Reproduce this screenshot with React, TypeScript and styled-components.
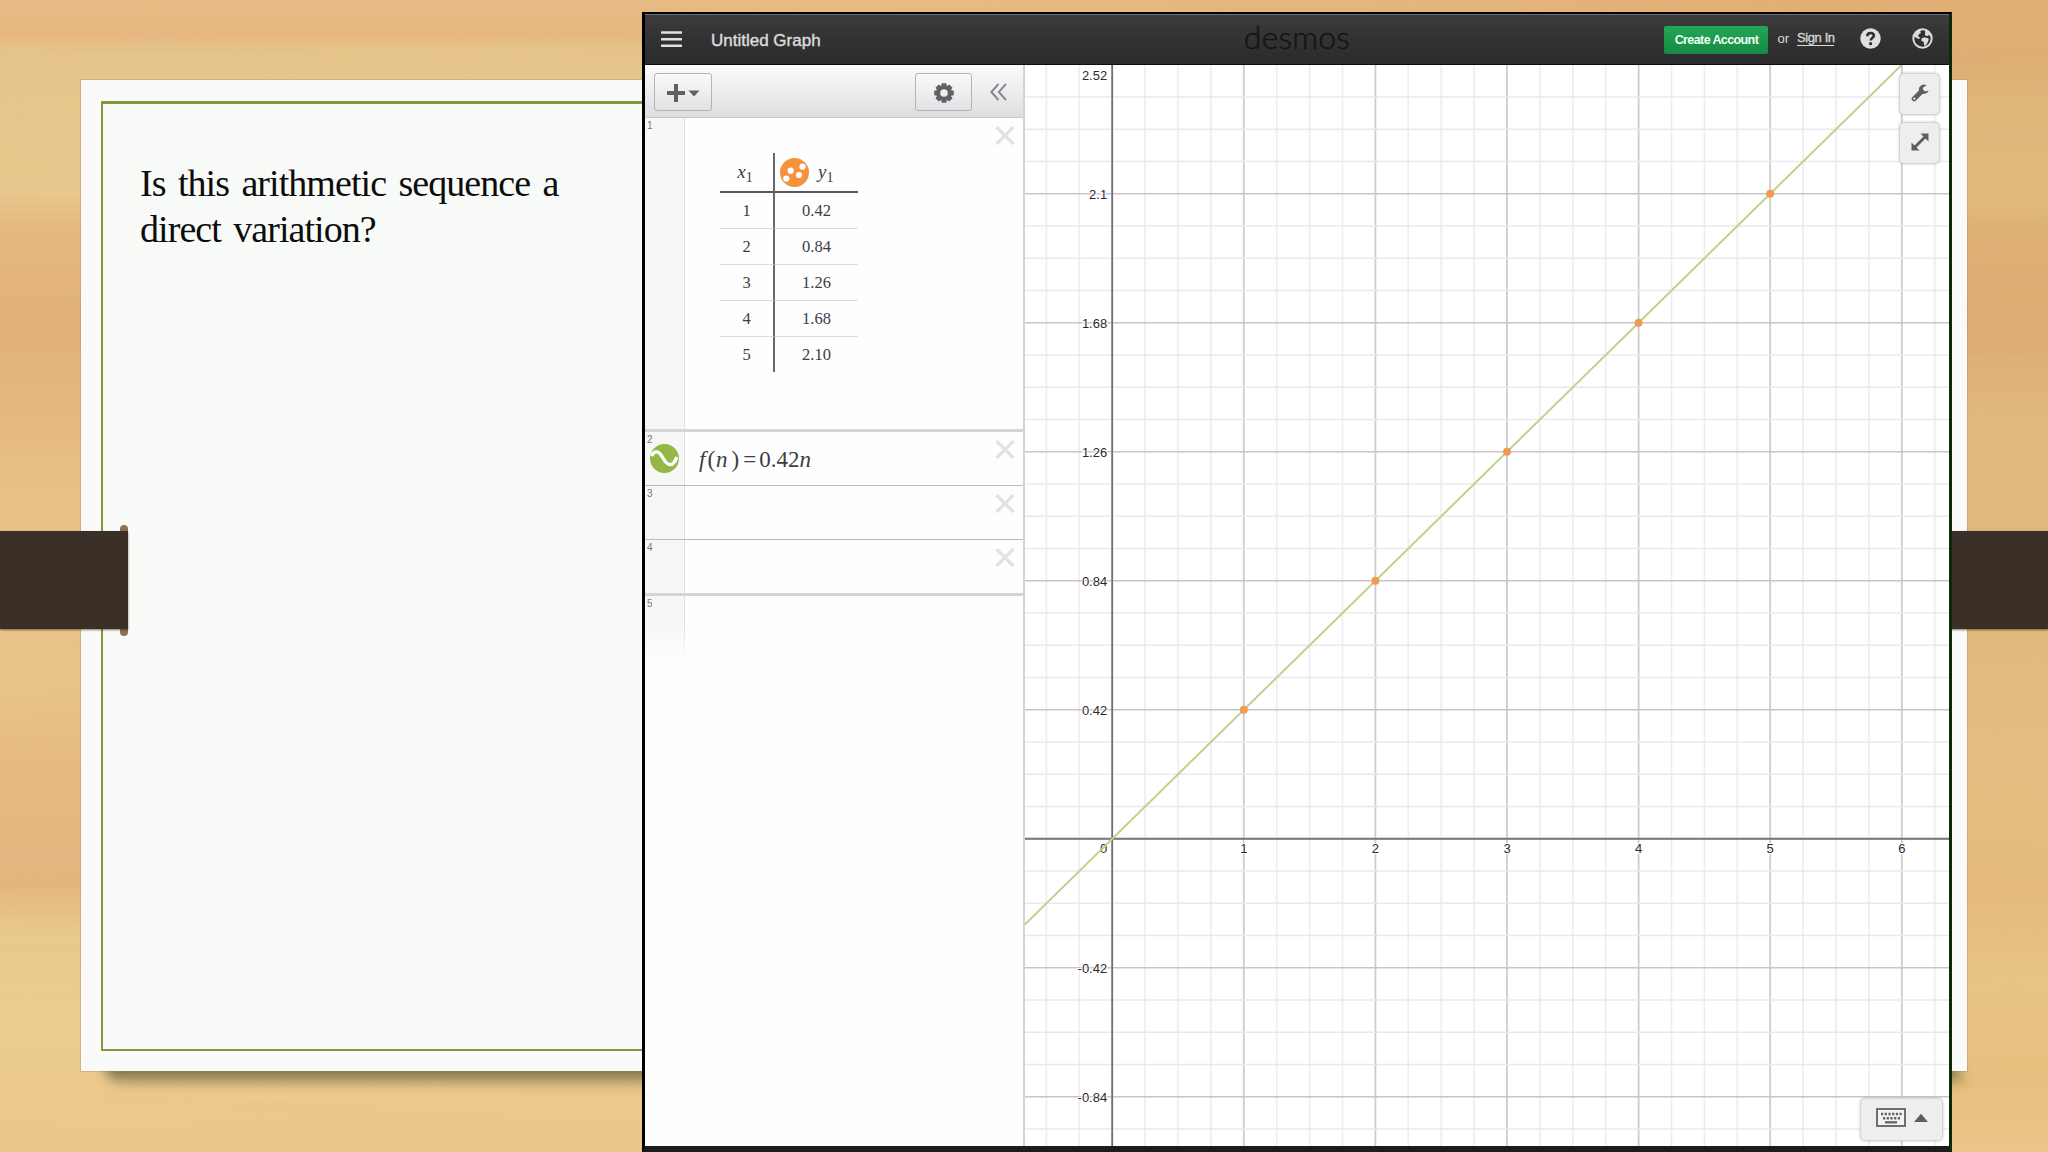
import React from "react";
import styled, { createGlobalStyle, css } from "styled-components";

const sans = `"Liberation Sans", Arial, sans-serif`;
const serif = `"Liberation Serif", "Times New Roman", serif`;

const GlobalStyle = createGlobalStyle`
  * { box-sizing: border-box; }
  body { margin: 0; overflow: hidden; }
`;

/* ---------- slide ---------- */

const Slide = styled.main`
  position: relative;
  width: 2048px;
  height: 1152px;
  overflow: hidden;
  padding: 80px 81px 81px;
  display: flex;
  background: linear-gradient(
    180deg, #e8bc86 0, #e6b67e 35px, #e6c58b 52px, #e7ca8e 190px, #e5b880 225px,
    #e2b079 320px, #e4b67e 400px, #e8c085 480px, #e8c488 620px, #e9c487 690px,
    #e6ba82 760px, #e3b57e 885px, #e8c88c 925px, #ebce90 1010px, #ebca8b 1090px, #ecc68a 1152px
  );
`;

const RightWood = styled.div`
  position: absolute;
  inset: 0;
  background: linear-gradient(
    180deg, #e2af74 0, #deae73 60px, #dfb578 100px, #e0ba7b 200px, #dfaf74 235px,
    #ddac72 330px, #e0b87c 420px, #e1b87c 620px, #e4bd80 760px, #e5bb7c 900px,
    #e8c584 980px, #e8c07e 1080px, #ecc68a 1152px
  );
  mask-image: linear-gradient(90deg, transparent 900px, #000 1800px);
`;

const Grain = styled.svg`
  position: absolute;
  inset: 0;
  opacity: 0.18;
`;

const PaperShadow = styled.div`
  position: absolute;
  left: 104px;
  right: 92px;
  top: 1052px;
  height: 28px;
  background: #6b6540;
  opacity: 0.85;
  filter: blur(7px);
  transform: skewX(20deg);
`;

const Paper = styled.section`
  position: relative;
  flex: 1;
  padding: 21px 20px 20px;
  display: flex;
  background: linear-gradient(180deg, #fbfafb, #fafafa);
  box-shadow: 0 0 0 1px rgba(160, 130, 90, 0.3);
`;

const Frame = styled.div`
  flex: 1;
  border: solid #80983a;
  border-width: 3px 2px 2px;
  padding: 56px 37px;
  background: linear-gradient(180deg, #f8faf8 0, #f9fbf9 520px, #f9f9fa 600px, #f9f9f9 100%);
`;

const Question = styled.p`
  margin: 0;
  width: 460px;
  font: 38px/46px ${serif};
  letter-spacing: -0.94px;
  word-spacing: 3.8px;
  color: #0c0c0c;
`;

const Slit = styled.div`
  position: absolute;
  left: 120px;
  top: 525px;
  width: 8px;
  height: 111px;
  border-radius: 4px;
  background: #8d7353;
`;

const Band = styled.div<{ $side: "left" | "right" }>`
  position: absolute;
  top: 531px;
  height: 98px;
  width: 128px;
  ${(p) => p.$side}: 0;
  background: #3a3028;
  box-shadow: 0 1px 2px rgba(50, 35, 20, 0.6);
`;

/* ---------- calculator window ---------- */

const Window = styled.div`
  position: absolute;
  left: 642px;
  top: 12px;
  width: 1310px;
  height: 1140px;
  display: flex;
  flex-direction: column;
  border: solid #000;
  border-width: 2px 3px 0;
  border-right-color: #0c2a08;
  border-bottom: 6px solid #1d1c1d;
  background: #fff;
`;

const Header = styled.header`
  height: 51px;
  flex: none;
  display: grid;
  grid-template-columns: 1fr auto 1fr;
  align-items: center;
  border-top: 1px solid #6f7370;
  border-bottom: 1px solid #0e0e10;
  background: linear-gradient(180deg, #3b3b3b, #2b2a2c);
`;

const HeaderLeft = styled.div`
  display: flex;
  align-items: center;
  padding-left: 16px;
  gap: 29px;
  margin-top: -1px;
`;

const Title = styled.h1`
  margin: 3px 0 0;
  font: 400 17px/20px ${sans};
  color: #dcdcdc;
  -webkit-text-stroke: 0.4px #dcdcdc;
`;

const Brand = styled.div`
  font: 300 32px/32px Lato, ${sans};
  letter-spacing: 0.2px;
  color: #151516;
  -webkit-text-stroke: 0.5px #151516;
  margin-top: -5px;
`;

const HeaderRight = styled.div`
  display: flex;
  align-items: center;
  justify-content: flex-end;
  padding-right: 16px;
  margin-top: -2px;
`;

const CreateButton = styled.button`
  width: 104px;
  height: 28px;
  margin-top: 3px;
  padding: 0;
  border: 0;
  border-radius: 2px;
  background: linear-gradient(180deg, #21a755, #178a45);
  color: #f2fff6;
  font: 700 12.5px/28px ${sans};
  letter-spacing: -0.6px;
  white-space: nowrap;
`;

const Or = styled.span`
  margin: 0 8px 0 9px;
  font: 13px/16px ${sans};
  color: #d8d8d8;
`;

const SignIn = styled.a`
  width: 37px;
  white-space: nowrap;
  font: 13px/16px ${sans};
  letter-spacing: -0.4px;
  color: #d8d8d8;
  -webkit-text-stroke: 0.3px #d8d8d8;
  border-bottom: 1px solid #d8d8d8;
  line-height: 14px;
`;

const IconSlot = styled.span<{ $gap: number }>`
  display: flex;
  margin-left: ${(p) => p.$gap}px;
`;

const Body = styled.div`
  flex: 1;
  display: flex;
  min-height: 0;
`;

const Sidebar = styled.aside`
  width: 380px;
  flex: none;
  display: flex;
  flex-direction: column;
  border-right: 2px solid #d4d2d5;
  background: #fefefe;
`;

const Toolbar = styled.div`
  height: 53px;
  flex: none;
  display: flex;
  align-items: center;
  padding: 1px 16px 0 9px;
  border-bottom: 1px solid #c9c7ca;
  background: linear-gradient(180deg, #fcfbfc, #dfdde0);
`;

const ToolButton = styled.button<{ $width: number }>`
  width: ${(p) => p.$width}px;
  height: 38px;
  padding: 2px 0 0;
  display: flex;
  align-items: center;
  justify-content: center;
  border: 1px solid #b5b3b6;
  border-radius: 3px;
  background: linear-gradient(180deg, #fbfafb, #e3e1e4);
`;

const Spacer = styled.div`
  flex: 1;
`;

const Collapse = styled.span`
  display: flex;
  margin-left: 18px;
`;

const Expression = styled.div<{ $height: number; $thick?: boolean; $last?: boolean }>`
  height: ${(p) => p.$height}px;
  flex: none;
  display: flex;
  border-bottom: ${(p) => (p.$last ? "0" : p.$thick ? "3px solid #d6d4d7" : "1px solid #bcbabd")};
`;

const Gutter = styled.div<{ $fade?: boolean; $tint?: boolean }>`
  width: 40px;
  flex: none;
  padding: 2px 0 0 2px;
  border-right: 1px solid #e1dfe2;
  background: ${(p) => (p.$tint ? "#f6f8f6" : "#f8f7f8")};
  font: 10px/12px ${sans};
  color: #77757a;
  ${(p) =>
    p.$fade &&
    css`
      mask-image: linear-gradient(180deg, #000 40%, transparent);
    `}
`;

const CurveIcon = styled.svg`
  display: block;
  margin: -2px 0 0 3px;
`;

const Content = styled.div<{ $table?: boolean }>`
  flex: 1;
  padding: ${(p) => (p.$table ? "35px 0 0 35px" : "13px 0 0 13px")};
`;

const CloseSlot = styled.span`
  display: flex;
  padding: 8px 8px 0 0;
`;

const Formula = styled.div`
  display: flex;
  align-items: baseline;
  font: 23px/29px ${serif};
  color: #3f3c42;
`;

const Part = styled.span<{ $left?: number; $italic?: boolean }>`
  margin-left: ${(p) => p.$left ?? 0}px;
  font-style: ${(p) => (p.$italic ? "italic" : "normal")};
`;

const Table = styled.div`
  width: 138px;
  display: grid;
  grid-template-columns: 55px 83px;
`;

const HeadCell = styled.div<{ $divider?: boolean }>`
  height: 40px;
  display: flex;
  align-items: center;
  justify-content: ${(p) => (p.$divider ? "flex-start" : "center")};
  gap: 9px;
  padding: ${(p) => (p.$divider ? "0 0 0 5px" : "0 3px 0 0")};
  border-bottom: 2px solid #5a565e;
  border-right: ${(p) => (p.$divider ? "0" : "2px solid #6a666e")};
  font: italic 19px/24px ${serif};
  color: #3f3c42;
  sub { font: 14px/10px ${serif}; vertical-align: -4px; }
`;

const Cell = styled.div<{ $divider?: boolean; $last?: boolean }>`
  height: ${(p) => (p.$last ? 35 : 36)}px;
  display: flex;
  align-items: center;
  justify-content: center;
  border-bottom: ${(p) => (p.$last ? "0" : "1px solid #dddbde")};
  border-right: ${(p) => (p.$divider ? "2px solid #6a666e" : "0")};
  font: 16.5px/20px ${serif};
  color: #3f3c42;
`;

const GraphPane = styled.div`
  position: relative;
  flex: 1;
  overflow: hidden;
`;

const GraphSvg = styled.svg`
  display: block;
`;

const FloatingButtons = styled.div`
  position: absolute;
  right: 9px;
  top: 8px;
  display: flex;
  flex-direction: column;
  gap: 7px;
`;

const buttonFace = css`
  display: flex;
  align-items: center;
  justify-content: center;
  padding: 0;
  border: 1px solid #d5d3d6;
  border-radius: 5px;
  background: #efeeef;
  box-shadow: 0 0 3px rgba(0, 0, 0, 0.2);
`;

const GraphButton = styled.button`
  ${buttonFace}
  width: 41px;
  height: 42px;
  padding-bottom: 2px;
`;

const KeypadButton = styled.button`
  ${buttonFace}
  position: absolute;
  right: 6px;
  bottom: 5px;
  width: 83px;
  height: 43px;
  gap: 8px;
  padding-bottom: 4px;
`;

/* ---------- icons ---------- */

const Hamburger = () => (
  <svg width="21" height="18" viewBox="0 0 21 18">
    <path d="M1 2.5h19M1 9.2h19M1 15.8h19" stroke="#e2e2e2" strokeWidth="2.6" strokeLinecap="round" />
  </svg>
);

const Close = () => (
  <svg width="20" height="19" viewBox="0 0 20 19">
    <path d="M1.500 1l17 17M18.500 1l-17 17" stroke="#e3e1e4" strokeWidth="3.200" />
  </svg>
);

const PlusCaret = () => (
  <svg width="34" height="20" viewBox="0 0 34 20">
    <path d="M10 1v18M1 10h18" stroke="#626065" strokeWidth="4" />
    <path d="M22.5 7.5h11l-5.500 6z" fill="#626065" />
  </svg>
);

const Gear = () => (
  <svg width="20" height="20" viewBox="-10 -10 20 20">
    {[0, 45, 90, 135, 180, 225, 270, 315].map((a) => (
      <path key={a} d="M-2.300 -9.800h4.600l.7 4h-6z" fill="#626065" transform={`rotate(${a})`} />
    ))}
    <circle r="5.600" fill="none" stroke="#626065" strokeWidth="3.600" />
  </svg>
);

const DoubleChevron = () => (
  <svg width="17" height="18" viewBox="0 0 17 18">
    <path d="M8.500 1L1.300 9l7.200 8M16 1L8.800 9l7.200 8" fill="none" stroke="#88868b" strokeWidth="1.900" />
  </svg>
);

const Help = () => (
  <svg width="21" height="21" viewBox="0 0 21 21">
    <circle cx="10.500" cy="10.500" r="10.200" fill="#e0e0e0" />
    <path d="M7.300 8.200c0-4.300 6.600-4.100 6.600-.6 0 2.400-3.200 2.400-3.200 4.900" fill="none" stroke="#302f31" strokeWidth="2.600" />
    <circle cx="10.600" cy="15.700" r="1.600" fill="#302f31" />
  </svg>
);

const Globe = () => (
  <svg width="21" height="21" viewBox="0 0 21 21">
    <circle cx="10.500" cy="10.500" r="9.200" fill="#302f31" stroke="#dcdcdc" strokeWidth="2" />
    <path d="M2 7C3.500 3.500 6.500 1.800 9.500 1.800l-1.300 2 .8 1.200-2.200 1.300-.6 2.200 1.800 1-.6 1.500-2-.6L3 9z" fill="#dcdcdc" />
    <path d="M13 2.200c3 .8 5 3 5.800 5.300l-2.300-.3-1.500 1-2.200-1.200.4-2zM9.500 10.500l3-1.300 4.300 1.300-.6 3-2.600 4.300-1.600-.6-.2-3.200-2.500-1.200z" fill="#dcdcdc" />
  </svg>
);

const Wrench = () => (
  <svg width="18" height="18" viewBox="0 0 18 18">
    <path d="M3.200 14.800l7.300-7.300" stroke="#5f5d62" strokeWidth="5" strokeLinecap="round" />
    <path d="M15.500 1.200A5.300 5.300 0 0 0 7.800 6.400a5.300 5.300 0 0 0 9.900 .2l-3.200.9-2.700-1.400.3-2.700z" fill="#5f5d62" />
    <circle cx="3.300" cy="14.700" r="1.100" fill="#efeeef" />
  </svg>
);

const Expand = () => (
  <svg width="20" height="20" viewBox="0 0 20 20">
    <path d="M4 16L16 4" stroke="#5f5d62" strokeWidth="2.800" />
    <path d="M10.500 1.500h8v8zM1.500 10.500v8h8z" fill="#5f5d62" />
  </svg>
);

const Keyboard = () => (
  <svg width="30" height="19" viewBox="0 0 30 19">
    <rect x="1" y="1" width="28" height="17" fill="#f4f3f4" stroke="#626065" strokeWidth="1.800" />
    <path d="M5 6h21M7 10.300h17" stroke="#626065" strokeWidth="2.400" strokeDasharray="2.200 1.500" />
    <path d="M9 14.300h12" stroke="#626065" strokeWidth="2.200" />
  </svg>
);

const CaretUp = () => (
  <svg width="14" height="9" viewBox="0 0 14 9">
    <path d="M0 9L7 .8 14 9z" fill="#5f5d62" />
  </svg>
);

const PointsIcon = () => (
  <svg width="29" height="29" viewBox="0 0 29 29">
    <circle cx="14.500" cy="14.500" r="14.500" fill="#f6923c" />
    <g fill="#fff">
      <circle cx="22.500" cy="8.700" r="3.100" />
      <circle cx="10.700" cy="12.700" r="3.100" />
      <circle cx="19" cy="17" r="3.100" />
      <circle cx="6.300" cy="20.600" r="3.100" />
    </g>
  </svg>
);

/* ---------- graph ---------- */

const W = 924;
const H = 1081;
const ORIGIN = { x: 87.2, y: 773.8 };
const UNIT = { x: 131.6, y: 129 };
const px = (n: number) => ORIGIN.x + n * UNIT.x;
const py = (n: number) => ORIGIN.y - n * UNIT.y;
const range = (a: number, b: number) => Array.from({ length: b - a + 1 }, (_, i) => a + i);

const yLabels: [number, string][] = [
  [6, "2.52"], [5, "2.1"], [4, "1.68"], [3, "1.26"], [2, "0.84"], [1, "0.42"], [-1, "-0.42"], [-2, "-0.84"],
];

const Graph = () => (
  <GraphSvg width={W} height={H} viewBox={`0 0 ${W} ${H}`}>
    {range(-2, 25).map((i) => (
      <line key={`v${i}`} x1={px(i / 4)} x2={px(i / 4)} y1={0} y2={H}
        stroke={i % 4 ? "#efebf0" : "#cfccd1"} strokeWidth={i % 4 ? 1.6 : 1.8} />
    ))}
    {range(-9, 23).map((i) => (
      <line key={`h${i}`} y1={py(i / 4)} y2={py(i / 4)} x1={0} x2={W}
        stroke={i % 4 ? "#ebe8ed" : "#c8c5ca"} strokeWidth={1.5} />
    ))}
    <line x1={px(0)} x2={px(0)} y1={0} y2={H} stroke="#6f6d70" strokeWidth="1.700" />
    <line x1={0} x2={W} y1={py(0)} y2={py(0)} stroke="#767477" strokeWidth="2" />
    <g fontFamily={sans} fontSize="13" fill="#2b292c" stroke="#fff" strokeWidth="2" paintOrder="stroke">
      {yLabels.map(([n, label]) => (
        <text key={label} x={px(0) - 5} y={n === 6 ? 14.500 : py(n) + 4.700} textAnchor="end">{label}</text>
      ))}
      {range(0, 6).map((n) => (
        <text key={n} x={px(n) - (n ? 0 : 5)} y={py(0) + 14.500} textAnchor={n ? "middle" : "end"}>{n}</text>
      ))}
    </g>
    <line x1={px(-1)} y1={py(-1)} x2={px(7)} y2={py(7)} stroke="#bdd388" strokeWidth="2" />
    {range(1, 5).map((n) => (
      <circle key={n} cx={px(n)} cy={py(n)} r="4" fill="#f29a50" />
    ))}
  </GraphSvg>
);

const rows = [["1", "0.42"], ["2", "0.84"], ["3", "1.26"], ["4", "1.68"], ["5", "2.10"]];

export default function App() {
  return (
    <>
      <GlobalStyle />
      <Slide>
        <RightWood />
        <Grain width="2048" height="1152">
          <filter id="wood" x="0" y="0" width="100%" height="100%">
            <feTurbulence type="fractalNoise" baseFrequency="0.004 0.09" numOctaves="3" seed="4" />
            <feColorMatrix values="0 0 0 0 0.72  0 0 0 0 0.5  0 0 0 0 0.28  0 1.600 0 0 -0.600" />
          </filter>
          <rect width="2048" height="1152" filter="url(#wood)" />
        </Grain>
        <PaperShadow />
        <Paper>
          <Frame>
            <Question>Is this arithmetic sequence a<br />direct variation?</Question>
          </Frame>
        </Paper>
        <Slit />
        <Band $side="left" />
        <Band $side="right" />
        <Window>
          <Header>
            <HeaderLeft>
              <Hamburger />
              <Title>Untitled Graph</Title>
            </HeaderLeft>
            <Brand>desmos</Brand>
            <HeaderRight>
              <CreateButton>Create Account</CreateButton>
              <Or>or</Or>
              <SignIn>Sign In</SignIn>
              <IconSlot $gap={26}><Help /></IconSlot>
              <IconSlot $gap={31}><Globe /></IconSlot>
            </HeaderRight>
          </Header>
          <Body>
            <Sidebar>
              <Toolbar>
                <ToolButton $width={58}><PlusCaret /></ToolButton>
                <Spacer />
                <ToolButton $width={57}><Gear /></ToolButton>
                <Collapse><DoubleChevron /></Collapse>
              </Toolbar>
              <Expression $height={314} $thick>
                <Gutter>1</Gutter>
                <Content $table>
                  <Table>
                    <HeadCell><span>x<sub>1</sub></span></HeadCell>
                    <HeadCell $divider><PointsIcon /><span>y<sub>1</sub></span></HeadCell>
                    {rows.map(([x, y], i) => (
                      <React.Fragment key={x}>
                        <Cell $divider $last={i === 4}>{x}</Cell>
                        <Cell $last={i === 4}>{y}</Cell>
                      </React.Fragment>
                    ))}
                  </Table>
                </Content>
                <CloseSlot><Close /></CloseSlot>
              </Expression>
              <Expression $height={54}>
                <Gutter>
                  2
                  <CurveIcon width="29" height="29" viewBox="0 0 29 29">
                    <circle cx="14.500" cy="14.500" r="14.500" fill="#94b845" />
                    <path d="M1.500 12C5 5.500 9 7 13 14S22 25 27 13" fill="none" stroke="#fff" strokeWidth="3.400" />
                  </CurveIcon>
                </Gutter>
                <Content>
                  <Formula>
                    <Part $italic $left={1}>f</Part>
                    <Part $left={2}>(</Part>
                    <Part $italic $left={1}>n</Part>
                    <Part $left={4}>)</Part>
                    <Part $left={4}>=</Part>
                    <Part $left={3}>0.42</Part>
                    <Part $italic>n</Part>
                  </Formula>
                </Content>
                <CloseSlot><Close /></CloseSlot>
              </Expression>
              <Expression $height={54}>
                <Gutter $tint>3</Gutter>
                <Content />
                <CloseSlot><Close /></CloseSlot>
              </Expression>
              <Expression $height={56} $thick>
                <Gutter $tint>4</Gutter>
                <Content />
                <CloseSlot><Close /></CloseSlot>
              </Expression>
              <Expression $height={68} $last>
                <Gutter $tint $fade>5</Gutter>
              </Expression>
            </Sidebar>
            <GraphPane>
              <Graph />
              <FloatingButtons>
                <GraphButton><Wrench /></GraphButton>
                <GraphButton><Expand /></GraphButton>
              </FloatingButtons>
              <KeypadButton><Keyboard /><CaretUp /></KeypadButton>
            </GraphPane>
          </Body>
        </Window>
      </Slide>
    </>
  );
}
